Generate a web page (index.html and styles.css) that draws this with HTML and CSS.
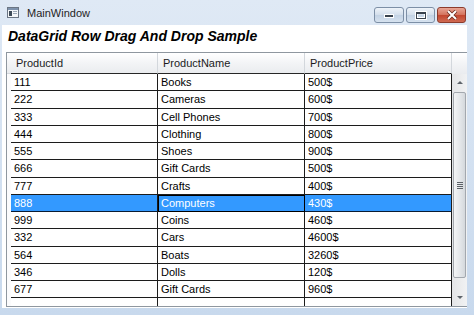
FILE: index.html
```html
<!DOCTYPE html>
<html lang="en">
<head>
    <meta charset="UTF-8">
    <title>MainWindow</title>
    <link rel="stylesheet" href="styles.css">
</head>
<body>
    <div class="window">
        <div class="titlebar">
            <svg class="app-icon" width="12" height="11" viewBox="0 0 12 11">
                <rect x="0.5" y="0.5" width="11" height="10" fill="#f4f6f8" stroke="#6b7684"/>
                <rect x="1" y="1" width="10" height="2" fill="#7f93ad"/>
                <rect x="2" y="4" width="3" height="5" fill="#3d4a57"/>
                <rect x="6" y="4" width="4" height="1" fill="#9aa6b4"/>
                <rect x="6" y="6" width="4" height="1" fill="#9aa6b4"/>
            </svg>
            <span class="title">MainWindow</span>
            <div class="caption-buttons">
                <div class="cap-btn">
                    <svg width="12" height="8" viewBox="0 0 12 8">
                        <rect x="1.5" y="3.5" width="9" height="3" fill="#39424d" stroke="#fff"/>
                    </svg>
                </div>
                <div class="cap-btn">
                    <svg width="12" height="9" viewBox="0 0 12 9">
                        <rect x="1.5" y="1.5" width="9" height="6" fill="none" stroke="#fff" stroke-width="3"/>
                        <rect x="1.5" y="1.5" width="9" height="6" fill="none" stroke="#39424d"/>
                        <rect x="2" y="2" width="8" height="1" fill="#39424d"/>
                    </svg>
                </div>
                <div class="cap-btn close">
                    <svg width="12" height="10" viewBox="0 0 12 10">
                        <path d="M2 1 L10 9 M10 1 L2 9" stroke="#6b2a1e" stroke-width="3.6"/>
                        <path d="M2 1 L10 9 M10 1 L2 9" stroke="#fff" stroke-width="2"/>
                    </svg>
                </div>
            </div>
        </div>

        <div class="client">
            <h1 class="heading">DataGrid Row Drag And Drop Sample</h1>

            <div class="datagrid">
                <div class="grid-header">
                    <div class="hcell corner"></div>
                    <div class="hcell">ProductId</div>
                    <div class="hcell">ProductName</div>
                    <div class="hcell">ProductPrice</div>
                    <div class="hcell scroll-corner"></div>
                </div>

                <div class="grid-body">
                    <div class="rows">
                        <div class="row"><div class="rowhead"></div><div class="cell">111</div><div class="cell">Books</div><div class="cell">500$</div></div>
                        <div class="row"><div class="rowhead"></div><div class="cell">222</div><div class="cell">Cameras</div><div class="cell">600$</div></div>
                        <div class="row"><div class="rowhead"></div><div class="cell">333</div><div class="cell">Cell Phones</div><div class="cell">700$</div></div>
                        <div class="row"><div class="rowhead"></div><div class="cell">444</div><div class="cell">Clothing</div><div class="cell">800$</div></div>
                        <div class="row"><div class="rowhead"></div><div class="cell">555</div><div class="cell">Shoes</div><div class="cell">900$</div></div>
                        <div class="row"><div class="rowhead"></div><div class="cell">666</div><div class="cell">Gift Cards</div><div class="cell">500$</div></div>
                        <div class="row"><div class="rowhead"></div><div class="cell">777</div><div class="cell">Crafts</div><div class="cell">400$</div></div>
                        <div class="row selected"><div class="rowhead"></div><div class="cell">888</div><div class="cell focus">Computers</div><div class="cell">430$</div></div>
                        <div class="row"><div class="rowhead"></div><div class="cell">999</div><div class="cell">Coins</div><div class="cell">460$</div></div>
                        <div class="row"><div class="rowhead"></div><div class="cell">332</div><div class="cell">Cars</div><div class="cell">4600$</div></div>
                        <div class="row"><div class="rowhead"></div><div class="cell">564</div><div class="cell">Boats</div><div class="cell">3260$</div></div>
                        <div class="row"><div class="rowhead"></div><div class="cell">346</div><div class="cell">Dolls</div><div class="cell">120$</div></div>
                        <div class="row"><div class="rowhead"></div><div class="cell">677</div><div class="cell">Gift Cards</div><div class="cell">960$</div></div>
                        <div class="row new-row"><div class="rowhead"></div><div class="cell"></div><div class="cell"></div><div class="cell"></div></div>
                    </div>

                    <div class="vscroll">
                        <div class="sb-btn"><span class="arrow up"></span></div>
                        <div class="sb-thumb"><span class="grip"></span></div>
                        <div class="sb-track"></div>
                        <div class="sb-btn"><span class="arrow down"></span></div>
                    </div>
                </div>
            </div>
        </div>
    </div>
</body>
</html>
```

FILE: styles.css
```css
body {
    margin: 0;
    padding: 0;
    font-family: "Liberation Sans", Arial, sans-serif;
    overflow: hidden;
}
.window {
    width: 474px;
    height: 315px;
    display: flex;
    flex-direction: column;
    background: linear-gradient(to bottom, #dfe9f5, #c8d9ed);
    box-sizing: border-box;
}

/* title bar */
.titlebar {
    height: 25px;
    display: flex;
    align-items: flex-start;
    padding-left: 7px;
}
.app-icon {
    margin-top: 7px;
    margin-right: 8px;
}
.title {
    font-size: 11px;
    line-height: 14px;
    margin-top: 6px;
    color: #1e1e1e;
}
.caption-buttons {
    margin-left: auto;
    margin-right: 8px;
    margin-top: 7px;
    display: flex;
    gap: 2px;
}
.cap-btn {
    width: 27px;
    height: 14px;
    border: 1px solid #7d8fa6;
    border-radius: 3px;
    background: linear-gradient(to bottom, #eef3f9, #d3deeb 50%, #c3d2e4 51%, #d6e2ef);
    display: flex;
    align-items: center;
    justify-content: center;
}
.cap-btn:first-child {
    width: 28px;
}
.cap-btn.close {
    border-color: #8c3b2c;
    background: linear-gradient(to bottom, #e8a595, #d3725c 50%, #c2452e 51%, #cf6a52);
}

/* client area */
.client {
    flex: 1;
    margin: 0 7px 7px 2px;
    background: #fff;
    display: flex;
    flex-direction: column;
}
.heading {
    margin: 0;
    height: 27px;
    box-sizing: border-box;
    padding: 3px 0 0 6px;
    font-size: 14px;
    line-height: 16px;
    font-weight: bold;
    font-style: italic;
    color: #000;
}

/* data grid */
.datagrid {
    margin-left: 4px;
    height: 255px;
    box-sizing: border-box;
    border: 1px solid #8f979f;
    border-right: none;
    font-size: 11px;
    color: #000;
}
.grid-header {
    display: grid;
    grid-template-columns: 4px 147px 147px 147px 15px;
    height: 21px;
}
.hcell {
    box-sizing: border-box;
    background: linear-gradient(to bottom, #ffffff, #f3f4f6 50%, #eaecef);
    border-right: 1px solid #d3d7dc;
    border-bottom: 1px solid #262626;
    padding-left: 5px;
    line-height: 20px;
    color: #1b1b1b;
}
.hcell.corner {
    padding: 0;
    border-right: none;
    border-bottom-color: #d3d7dc;
}
.hcell.scroll-corner {
    border-right: none;
    border-bottom: none;
}
.grid-body {
    display: flex;
    height: 232px;
    overflow: hidden;
}
.rows {
    width: 445px;
}
.row {
    display: grid;
    grid-template-columns: 4px 147px 147px 147px;
    height: 17.25px;
}
.rowhead {
    background: #fbfbfc;
}
.cell {
    box-sizing: border-box;
    border-right: 1px solid #1c1c1c;
    border-bottom: 1px solid #1c1c1c;
    padding-left: 3px;
    line-height: 16px;
    white-space: nowrap;
    overflow: hidden;
}
.row.selected .cell {
    background: #3399ff;
    color: #fff;
    border-bottom-color: #0a1c33;
}
.row.selected .cell.focus {
    outline: 1px solid #000;
    outline-offset: -1px;
}
.new-row .cell:first-child {
    border-left: 1px solid #8a8a8a;
}

/* vertical scrollbar */
.vscroll {
    width: 15px;
    display: flex;
    flex-direction: column;
    background: linear-gradient(to right, #e4e5e7, #f1f2f3);
}
.sb-btn {
    height: 17px;
    display: flex;
    align-items: center;
    justify-content: center;
}
.arrow {
    width: 0;
    height: 0;
    border-left: 3px solid transparent;
    border-right: 3px solid transparent;
}
.arrow.up {
    border-bottom: 3px solid #5e646b;
}
.arrow.down {
    border-top: 3px solid #5e646b;
}
.sb-thumb {
    height: 186px;
    margin: 1px 1px 0 1px;
    box-sizing: border-box;
    border: 1px solid #a3a8ae;
    border-radius: 2px;
    background: linear-gradient(to right, #f3f4f5, #e2e5e8 60%, #d4d8dc);
    display: flex;
    align-items: center;
    justify-content: center;
}
.grip {
    width: 6px;
    height: 7px;
    background: repeating-linear-gradient(to bottom, #5d6268 0 1px, transparent 1px 2px);
}
.sb-track {
    flex: 1;
}
```
